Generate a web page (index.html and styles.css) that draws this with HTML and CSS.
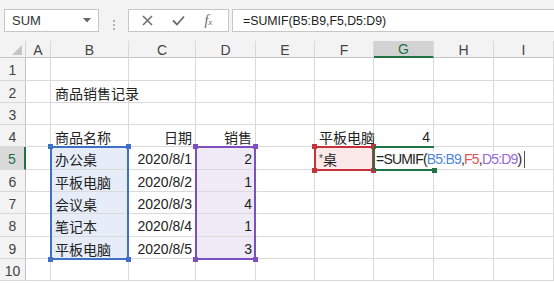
FILE: index.html
```html
<!DOCTYPE html>
<html lang="zh-CN">
<head>
    <meta charset="UTF-8">
    <title>SUMIF</title>
    <link rel="stylesheet" href="styles.css">
</head>
<body>
    <!-- 名称框和编辑栏 -->
    <div class="toolbar">
        <div class="name-box">
            <span>SUM</span>
            <svg class="caret" width="8" height="5" viewBox="0 0 8 5"><path d="M0 0h8L4 4.5z" fill="#666"/></svg>
        </div>
        <div class="grip"><i></i><i></i><i></i></div>
        <div class="fx-buttons">
            <svg width="11" height="11" viewBox="0 0 11 11"><path d="M1 1l9 9M10 1l-9 9" stroke="#6b6b6b" stroke-width="1.5"/></svg>
            <svg width="13" height="11" viewBox="0 0 13 11"><path d="M1 5.5l4 4L12 1.5" stroke="#6b6b6b" stroke-width="1.8" fill="none"/></svg>
            <span class="fx">f<sub>x</sub></span>
        </div>
        <div class="formula-box">=SUMIF(B5:B9,F5,D5:D9)</div>
    </div>

    <!-- 表格 -->
    <div class="sheet">
        <div class="grid">
            <div class="corner"><span class="tri"></span></div>
            <div class="col-head">A</div>
            <div class="col-head">B</div>
            <div class="col-head">C</div>
            <div class="col-head">D</div>
            <div class="col-head">E</div>
            <div class="col-head">F</div>
            <div class="col-head active">G</div>
            <div class="col-head">H</div>
            <div class="col-head">I</div>

            <div class="row-head">1</div>
            <div class="cell"></div><div class="cell"></div><div class="cell"></div><div class="cell"></div><div class="cell"></div><div class="cell"></div><div class="cell"></div><div class="cell"></div><div class="cell"></div>

            <div class="row-head">2</div>
            <div class="cell"></div><div class="cell">商品销售记录</div><div class="cell"></div><div class="cell"></div><div class="cell"></div><div class="cell"></div><div class="cell"></div><div class="cell"></div><div class="cell"></div>

            <div class="row-head">3</div>
            <div class="cell"></div><div class="cell"></div><div class="cell"></div><div class="cell"></div><div class="cell"></div><div class="cell"></div><div class="cell"></div><div class="cell"></div><div class="cell"></div>

            <div class="row-head">4</div>
            <div class="cell"></div><div class="cell">商品名称</div><div class="cell num">日期</div><div class="cell num">销售</div><div class="cell"></div><div class="cell">平板电脑</div><div class="cell num">4</div><div class="cell"></div><div class="cell"></div>

            <div class="row-head active">5</div>
            <div class="cell"></div><div class="cell fill-blue">办公桌</div><div class="cell num">2020/8/1</div><div class="cell num fill-purple">2</div><div class="cell"></div><div class="cell fill-red"><span class="star">*</span>桌</div>
            <div class="cell editing"><span class="editor">=SUMIF(<b class="c-blue">B5:B9</b>,<b class="c-red">F5</b>,<b class="c-purple">D5:D9</b>)<i class="caret-line"></i></span></div>
            <div class="cell"></div><div class="cell"></div>

            <div class="row-head">6</div>
            <div class="cell"></div><div class="cell fill-blue">平板电脑</div><div class="cell num">2020/8/2</div><div class="cell num fill-purple">1</div><div class="cell"></div><div class="cell"></div><div class="cell"></div><div class="cell"></div><div class="cell"></div>

            <div class="row-head">7</div>
            <div class="cell"></div><div class="cell fill-blue">会议桌</div><div class="cell num">2020/8/3</div><div class="cell num fill-purple">4</div><div class="cell"></div><div class="cell"></div><div class="cell"></div><div class="cell"></div><div class="cell"></div>

            <div class="row-head">8</div>
            <div class="cell"></div><div class="cell fill-blue">笔记本</div><div class="cell num">2020/8/4</div><div class="cell num fill-purple">1</div><div class="cell"></div><div class="cell"></div><div class="cell"></div><div class="cell"></div><div class="cell"></div>

            <div class="row-head">9</div>
            <div class="cell"></div><div class="cell fill-blue">平板电脑</div><div class="cell num">2020/8/5</div><div class="cell num fill-purple">3</div><div class="cell"></div><div class="cell"></div><div class="cell"></div><div class="cell"></div><div class="cell"></div>

            <div class="row-head">10</div>
            <div class="cell"></div><div class="cell"></div><div class="cell"></div><div class="cell"></div><div class="cell"></div><div class="cell"></div><div class="cell"></div><div class="cell"></div><div class="cell"></div>
        </div>

        <!-- 引用区域的彩色框，叠在表格上面 -->
        <div class="grid ranges">
            <div class="range blue range-b"><i class="h tl"></i><i class="h tr"></i><i class="h bl"></i><i class="h br"></i></div>
            <div class="range purple range-d"><i class="h tl"></i><i class="h tr"></i><i class="h bl"></i><i class="h br"></i></div>
            <div class="range red range-f"><i class="h tl"></i><i class="h tr"></i><i class="h bl"></i><i class="h br"></i></div>
            <div class="range green range-g"><i class="h br"></i></div>
        </div>
    </div>
</body>
</html>
```

FILE: styles.css
```css
body {
    margin: 0;
    background: #fff;
    font-family: "Liberation Sans", "Noto Sans CJK SC", sans-serif;
    font-size: 14px;
    color: #222;
    overflow: hidden;
}

/* 编辑栏 */
.toolbar {
    display: flex;
    height: 41px;
    padding-top: 9px;
    box-sizing: border-box;
    background: #f3f3f3;
}
.name-box {
    flex: none;
    width: 95px;
    height: 23px;
    margin-left: 4px;
    box-sizing: border-box;
    border: 1px solid #c6c6c6;
    background: #fff;
    display: flex;
    align-items: center;
    justify-content: space-between;
    padding: 0 7px 0 7px;
    font-size: 13px;
    color: #333;
}
.grip {
    flex: none;
    width: 29px;
    display: flex;
    flex-direction: column;
    align-items: center;
    justify-content: center;
    gap: 2px;
}
.grip i {
    width: 2px;
    height: 2px;
    background: #b0b0b0;
}
.fx-buttons {
    flex: none;
    width: 101px;
    height: 23px;
    box-sizing: border-box;
    border: 1px solid #c6c6c6;
    background: #fff;
    display: flex;
    align-items: center;
    justify-content: space-around;
    padding: 0 6px 0 3px;
}
.fx {
    font-family: "Liberation Serif", serif;
    font-style: italic;
    font-size: 14px;
    color: #666;
}
.fx sub {
    font-size: 9px;
    vertical-align: 0;
}
.formula-box {
    flex: 1;
    height: 23px;
    margin-left: 3px;
    margin-right: -4px;
    box-sizing: border-box;
    border: 1px solid #c6c6c6;
    background: #fff;
    padding-left: 10px;
    display: flex;
    align-items: center;
    font-size: 12.3px;
    color: #222;
}

/* 表格 */
.sheet {
    position: relative;
}
.grid {
    display: grid;
    grid-template-columns: 26px 25px 78px 67px 60px 59px 59px 60px 60px 60px;
    grid-template-rows: 17px 23px 22px 22px 22px 23px 22px 22px 23px 22px 22px;
}
.corner {
    background: #f3f3f3;
    border-right: 1px solid #d4d4d4;
    border-bottom: 1px solid #c6c6c6;
    position: relative;
}
.tri {
    position: absolute;
    right: 3px;
    bottom: 2px;
    width: 0;
    height: 0;
    border-left: 10px solid transparent;
    border-bottom: 10px solid #c4c4c4;
}
.col-head {
    background: #f3f3f3;
    border-right: 1px solid #d9d9d9;
    border-bottom: 1px solid #c6c6c6;
    display: flex;
    align-items: center;
    justify-content: center;
    font-size: 14px;
    color: #444;
    padding-top: 1px;
}
.col-head.active {
    background: #d3d3d3;
    border-bottom: 2px solid #217346;
    color: #217346;
}
.row-head {
    background: #f3f3f3;
    border-right: 1px solid #c6c6c6;
    border-bottom: 1px solid #d9d9d9;
    display: flex;
    align-items: center;
    justify-content: center;
    padding-top: 2px;
    font-size: 14px;
    color: #444;
}
.row-head.active {
    background: #dadada;
    border-right: 2px solid #217346;
    color: #217346;
}
.cell {
    border-right: 1px solid #dadada;
    border-bottom: 1px solid #dadada;
    display: flex;
    align-items: center;
    padding: 2px 4px 0 4px;
    white-space: nowrap;
    min-width: 0;
}
.cell.num {
    justify-content: flex-end;
    padding-right: 3px;
}
.fill-blue { background: #e6edf8; }
.fill-purple { background: #efebf6; }
.fill-red { background: #fbe8e8; }
.star {
    font-size: 10px;
    align-self: flex-start;
    margin-top: 4px;
    color: #444;
}
.cell.editing {
    position: relative;
    z-index: 3;
}
.editor {
    background: #fff;
    padding-right: 3px;
    margin-left: -2px;
    font-size: 14px;
    letter-spacing: -0.8px;
}
.editor b {
    font-weight: normal;
}
.c-blue { color: #4f86d9; }
.c-red { color: #e05252; }
.c-purple { color: #9a68d4; }
.caret-line {
    display: inline-block;
    width: 1px;
    height: 17px;
    background: #555;
    vertical-align: -4px;
    margin-left: 3px;
}

/* 引用框 */
.ranges {
    position: absolute;
    top: 0;
    left: 0;
    right: 0;
    z-index: 4;
    pointer-events: none;
}
.range {
    margin: -1px 0 -1px -1px;
    border: 2px solid;
    position: relative;
}
.range.blue { border-color: #3e70c8; }
.range.purple { border-color: #7d4fc1; }
.range.red { border-color: #c5323a; }
.range.green { border-color: #217346; border-right: none; }
.range-b { grid-column: 3; grid-row: 6 / 11; }
.range-d { grid-column: 5; grid-row: 6 / 11; }
.range-f { grid-column: 7; grid-row: 6; }
.range-g { grid-column: 8; grid-row: 6; }
.h {
    position: absolute;
    width: 5px;
    height: 5px;
}
.blue .h { background: #3e70c8; }
.purple .h { background: #7d4fc1; }
.red .h { background: #c5323a; }
.green .h { background: #217346; }
.tl { left: -4px; top: -4px; }
.tr { right: -4px; top: -4px; }
.bl { left: -4px; bottom: -4px; }
.br { right: -4px; bottom: -4px; }
.green .br { right: -3px; }
```
